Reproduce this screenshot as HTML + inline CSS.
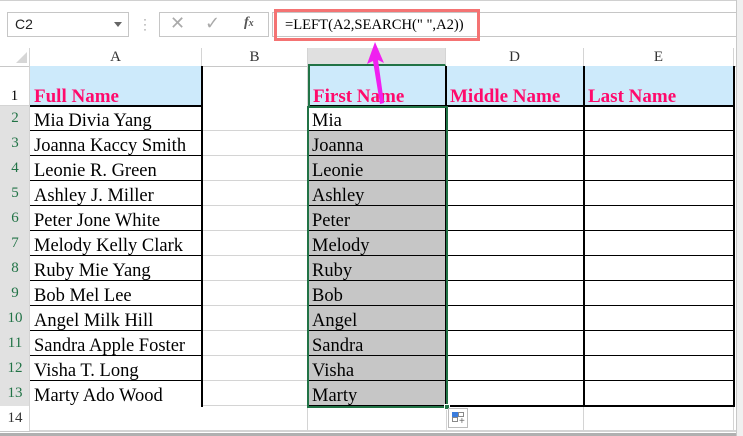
<!DOCTYPE html>
<html><head><meta charset="utf-8"><style>
*{margin:0;padding:0;box-sizing:border-box}
body{width:743px;height:436px;background:#fff;position:relative;overflow:hidden;font-family:"Liberation Serif",serif}
.a{position:absolute}
.t{position:absolute;font-size:18.5px;color:#000;white-space:nowrap;line-height:25px}
.h{position:absolute;font-size:19px;font-weight:bold;color:#ff0a6c;white-space:nowrap}
.rn{position:absolute;left:0;width:30px;text-align:center;font-size:15px;line-height:25px;color:#217346;background:#e1e1e1;border-bottom:1px solid #c8c8c8}
.ch{position:absolute;top:48px;height:18px;text-align:center;font-size:15px;line-height:18px;color:#333;border-right:1px solid #d4d4d4}
</style></head><body>
<div class="a" style="left:0;top:0;width:743px;height:46px;background:#fff;border-top:1px solid #d0d0d0"></div>
<div class="a" style="left:7px;top:12px;width:122px;height:25px;border:1px solid #c6c6c6;font-family:'Liberation Sans',sans-serif;font-size:14px;line-height:23px;padding-left:7px;color:#222">C2</div>
<div class="a" style="left:114px;top:22px;width:0;height:0;border-left:4px solid transparent;border-right:4px solid transparent;border-top:5px solid #666"></div>
<div class="a" style="left:143px;top:17px;color:#888;font-size:12px;line-height:5px;font-family:'Liberation Sans'">·<br>·<br>·</div>
<div class="a" style="left:159px;top:12px;width:110px;height:25px;border:1px solid #c6c6c6"></div>
<div class="a" style="left:170px;top:13px;color:#aaa;font-size:18px;font-family:'Liberation Sans'">✕</div>
<div class="a" style="left:205px;top:13px;color:#aaa;font-size:18px;font-family:'DejaVu Sans'">✓</div>
<div class="a" style="left:244px;top:15px;color:#555;font-size:14px;font-style:italic;font-weight:bold">f<span style="font-size:10px">x</span></div>
<div class="a" style="left:272px;top:12px;width:471px;height:25px;border:1px solid #c6c6c6;border-right:none"></div>
<div class="a" style="left:274px;top:9px;width:206px;height:32px;border:3px solid #f47373"></div>
<div class="a" style="left:285px;top:15px;font-size:14.6px;line-height:20px">=LEFT(A2,SEARCH(" ",A2))</div>
<div class="a" style="left:0;top:48px;width:30px;height:18px;border-right:1px solid #d4d4d4;background:#fff"></div>
<div class="a" style="left:16px;top:52px;width:0;height:0;border-left:11px solid transparent;border-bottom:11px solid #d6d6d6"></div>
<div class="ch" style="left:30px;width:172px">A</div>
<div class="ch" style="left:202px;width:106px">B</div>
<div class="ch" style="left:308px;width:138px;background:#e0e0e0;border-bottom:2px solid #217346"></div>
<div class="ch" style="left:446px;width:138px">D</div>
<div class="ch" style="left:584px;width:150px">E</div>
<div class="a" style="left:0;top:66px;width:743px;height:1px;background:#c8c8c8"></div>
<div class="a" style="left:0;top:66px;width:30px;height:40px;border-right:1px solid #d4d4d4;border-bottom:1px solid #d4d4d4;font-size:15px;text-align:center;line-height:60px">1</div>
<div class="a" style="left:30px;top:66px;width:172px;height:40px;background:#cdeafb"></div>
<div class="a" style="left:308px;top:66px;width:426px;height:40px;background:#cdeafb"></div>
<div class="h" style="left:34px;top:86px">Full Name</div>
<div class="h" style="left:313px;top:86px">First Name</div>
<div class="h" style="left:450px;top:86px">Middle Name</div>
<div class="h" style="left:588px;top:86px">Last Name</div>
<div class="a" style="left:30px;top:406px;width:713px;height:25px;border-bottom:1px solid #d4d4d4"></div>
<div class="a" style="left:202px;top:66px;width:106px;height:365px;border-right:1px solid #d4d4d4"></div>
<div class="a" style="left:446px;top:406px;width:138px;height:25px;border-left:1px solid #d4d4d4;border-right:1px solid #d4d4d4"></div>
<div class="a" style="left:733px;top:48px;width:1px;height:383px;background:#d4d4d4"></div>
<div class="a" style="left:0;top:431px;width:743px;height:5px;background:#fff;border-top:1px solid #d4d4d4"></div>
<div class="a" style="left:0;top:433px;width:743px;height:3px;background:#b0b0b0"></div>
<div class="a" style="left:736px;top:0;width:7px;height:436px;background:#f0f0f0;border-left:1px solid #c8c8c8"></div>
<div class="a" style="left:308px;top:131px;width:138px;height:275px;background:#c6c6c6"></div>
<div class="a" style="left:30px;top:66px;width:173px;height:341px;border-right:2px solid #000"></div>
<div class="a" style="left:308px;top:66px;width:427px;height:341px;border:2px solid #000;border-top:none;border-left:none"></div>
<div class="a" style="left:445px;top:66px;width:2px;height:341px;background:#000"></div>
<div class="a" style="left:583px;top:66px;width:2px;height:341px;background:#000"></div>
<div class="a" style="left:30px;top:105px;width:173px;height:2px;background:#000"></div>
<div class="a" style="left:308px;top:105px;width:427px;height:2px;background:#000"></div>
<div class="a" style="left:30px;top:130px;width:705px;height:1px;background:#000;box-shadow:0 25px 0 #000,0 50px 0 #000,0 75px 0 #000,0 100px 0 #000,0 125px 0 #000,0 150px 0 #000,0 175px 0 #000,0 200px 0 #000,0 225px 0 #000,0 250px 0 #000"></div>
<div class="a" style="left:203px;top:130px;width:105px;height:277px;background:#fff"></div>
<div class="a" style="left:203px;top:130px;width:105px;height:1px;background:#d4d4d4;box-shadow:0 25px 0 #d4d4d4,0 50px 0 #d4d4d4,0 75px 0 #d4d4d4,0 100px 0 #d4d4d4,0 125px 0 #d4d4d4,0 150px 0 #d4d4d4,0 175px 0 #d4d4d4,0 200px 0 #d4d4d4,0 225px 0 #d4d4d4,0 250px 0 #d4d4d4,0 275px 0 #d4d4d4"></div>
<div class="rn" style="top:106px">2</div><div class="rn" style="top:131px">3</div><div class="rn" style="top:156px">4</div><div class="rn" style="top:181px">5</div><div class="rn" style="top:206px">6</div><div class="rn" style="top:231px">7</div><div class="rn" style="top:256px">8</div><div class="rn" style="top:281px">9</div><div class="rn" style="top:306px">10</div><div class="rn" style="top:331px">11</div><div class="rn" style="top:356px">12</div><div class="rn" style="top:381px">13</div>
<div class="rn" style="top:406px;background:#fff;color:#333">14</div>
<div class="a" style="left:29px;top:66px;width:1px;height:365px;background:#d4d4d4"></div>
<div class="t" style="left:34px;top:109px">Mia Divia Yang</div>
<div class="t" style="left:34px;top:134px">Joanna Kaccy Smith</div>
<div class="t" style="left:34px;top:159px">Leonie R. Green</div>
<div class="t" style="left:34px;top:184px">Ashley J. Miller</div>
<div class="t" style="left:34px;top:209px">Peter Jone White</div>
<div class="t" style="left:34px;top:234px">Melody Kelly Clark</div>
<div class="t" style="left:34px;top:259px">Ruby Mie Yang</div>
<div class="t" style="left:34px;top:284px">Bob Mel Lee</div>
<div class="t" style="left:34px;top:309px">Angel Milk Hill</div>
<div class="t" style="left:34px;top:334px">Sandra Apple Foster</div>
<div class="t" style="left:34px;top:359px">Visha T. Long</div>
<div class="t" style="left:34px;top:384px">Marty Ado Wood</div>
<div class="t" style="left:312px;top:109px">Mia</div>
<div class="t" style="left:312px;top:134px">Joanna</div>
<div class="t" style="left:312px;top:159px">Leonie</div>
<div class="t" style="left:312px;top:184px">Ashley</div>
<div class="t" style="left:312px;top:209px">Peter</div>
<div class="t" style="left:312px;top:234px">Melody</div>
<div class="t" style="left:312px;top:259px">Ruby</div>
<div class="t" style="left:312px;top:284px">Bob</div>
<div class="t" style="left:312px;top:309px">Angel</div>
<div class="t" style="left:312px;top:334px">Sandra</div>
<div class="t" style="left:312px;top:359px">Visha</div>
<div class="t" style="left:312px;top:384px">Marty</div>
<div class="a" style="left:307px;top:106px;width:141px;height:302px;border:2px solid #217346"></div>
<div class="a" style="left:308px;top:66px;width:2px;height:40px;background:#217346"></div>
<div class="a" style="left:444px;top:404px;width:6px;height:6px;background:#217346;border:1px solid #fff"></div>
<div class="a" style="left:448px;top:408px;width:20px;height:20px;border:1px solid #bbb;background:#fff"></div>
<div class="a" style="left:452px;top:412px;width:6px;height:5px;background:#3b7ddd"></div>
<div class="a" style="left:458px;top:412px;width:6px;height:5px;border:1px solid #888"></div>
<div class="a" style="left:452px;top:417px;width:6px;height:5px;border:1px solid #888"></div>
<div class="a" style="left:459px;top:417px;font-size:10px;color:#666;font-family:'Liberation Sans';line-height:10px">+</div>
<svg class="a" style="left:360px;top:38px" width="40" height="72"><polygon points="15,4 7,26 13,23 20,66 24,65 18,22 24,25" fill="#f020f0"/></svg>
</body></html>
